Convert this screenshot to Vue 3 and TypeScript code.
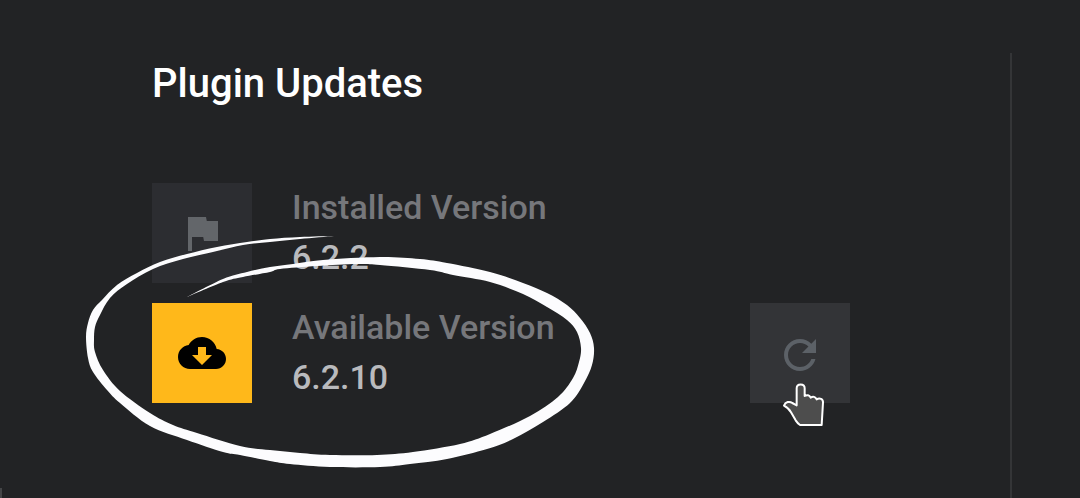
<script setup lang="ts">
type Point = [number, number]

interface VersionRow {
  id: string
  label: string
  version: string
  icon: string
  highlighted: boolean
}

const rows: VersionRow[] = [
  {
    id: 'installed',
    label: 'Installed Version',
    version: '6.2.2',
    icon: 'M14.4 6L14 4H5v17h2v-7h5.6l.4 2h7V6z',
    highlighted: false,
  },
  {
    id: 'available',
    label: 'Available Version',
    version: '6.2.10',
    icon: 'M19.35 10.04C18.67 6.59 15.64 4 12 4 9.11 4 6.6 5.64 5.35 8.04 2.34 8.36 0 10.91 0 14c0 3.31 2.69 6 6 6h13c2.76 0 5-2.24 5-5 0-2.64-2.05-4.78-4.65-4.96zM17 13l-5 5-5-5h3V9h4v4h3z',
    highlighted: true,
  },
]

// Outer edge of the brush stroke, counter-clockwise from its first tip.
const outerEdge: Point[] = [
  [334, 236], [300, 237], [270, 239], [247, 242], [217, 247], [187, 254], [160, 262], [137, 273],
  [117, 285], [102, 300], [93, 310], [88, 323], [86, 337], [88, 358], [93, 372], [107, 390],
  [120, 403], [150, 426], [187, 440], [223, 452], [240, 455], [270, 461], [290, 464], [330, 467],
  [380, 467], [410, 464], [447, 459], [487, 449], [513, 439], [543, 422], [570, 403], [584, 383],
  [592, 365], [594, 348], [590, 333], [580, 318], [567, 305], [547, 293], [523, 283], [490, 272],
  [447, 263], [420, 259], [380, 257], [323, 260], [293, 264], [270, 267], [247, 272], [223, 279],
  [187, 297],
]

// Inner edge, back from the second tip to the first.
const innerEdge: Point[] = [
  [187, 297], [223, 282], [243, 277], [270, 272], [280, 269], [317, 266], [357, 264], [380, 265],
  [430, 270], [453, 275], [490, 282], [523, 294], [547, 307], [567, 320], [577, 332], [581, 348],
  [579, 362], [573, 378], [558, 397], [530, 416], [490, 434], [460, 444], [413, 452],
  [377, 455], [330, 455], [300, 453], [270, 450], [240, 446], [197, 433], [173, 425], [150, 413],
  [120, 391], [103, 370], [95, 352], [94, 340], [95, 327], [100, 315], [110, 298], [127, 284],
  [153, 269], [183, 259], [217, 251], [243, 245], [270, 242], [300, 239], [334, 236],
]

function curveThrough(points: Point[]): string {
  return points
    .slice(0, -1)
    .map((p, i) => {
      const before = points[i - 1] ?? p
      const next = points[i + 1]
      const after = points[i + 2] ?? next
      const c1 = [p[0] + (next[0] - before[0]) / 6, p[1] + (next[1] - before[1]) / 6]
      const c2 = [next[0] - (after[0] - p[0]) / 6, next[1] - (after[1] - p[1]) / 6]
      return `C${c1.join(' ')} ${c2.join(' ')} ${next.join(' ')}`
    })
    .join('')
}

const brushPath = `M${outerEdge[0].join(' ')}${curveThrough(outerEdge)}${curveThrough(innerEdge)}Z`
</script>

<template>
  <main class="page">
    <section class="panel" aria-labelledby="updates-title">
      <h1 id="updates-title" class="title">Plugin Updates</h1>
      <div class="rows">
        <div v-for="row in rows" :key="row.id" class="row">
          <div class="tile" :class="{ highlighted: row.highlighted }">
            <svg class="icon" viewBox="0 0 24 24" aria-hidden="true"><path :d="row.icon" /></svg>
          </div>
          <dl class="details">
            <dt>{{ row.label }}</dt>
            <dd>{{ row.version }}</dd>
          </dl>
          <svg v-if="row.highlighted" class="brush" viewBox="80 230 520 244" aria-hidden="true">
            <path :d="brushPath" />
          </svg>
          <button v-if="row.highlighted" class="refresh" type="button" aria-label="Check for updates">
            <svg class="icon" viewBox="0 0 24 24" aria-hidden="true">
              <path d="M17.65 6.35C16.2 4.9 14.21 4 12 4c-4.42 0-7.99 3.58-7.99 8s3.57 8 7.99 8c3.73 0 6.84-2.55 7.73-6h-2.08c-.82 2.33-3.04 4-5.65 4-3.31 0-6-2.69-6-6s2.69-6 6-6c1.66 0 3.14.69 4.22 1.78L13 11h7V4l-2.35 2.35z" />
            </svg>
            <svg class="pointer" viewBox="0 0 141 144" aria-hidden="true">
              <path d="M50 76V25C50 10 74 10 74 25V48C81 44 88 45 92 53C99 48 106 50 110 58C119 52 130 57 129 68L125 135H60C55 132 51 127 47 121L33 97C28 87 21 82 12 77C16 65 29 63 37 69Z" />
            </svg>
          </button>
        </div>
      </div>
    </section>
  </main>
</template>

<style>
body {
  margin: 0;
  background: #222325;
}
</style>

<style scoped>
.page {
  position: relative;
  box-sizing: border-box;
  min-height: 100vh;
  padding: 53px 68px 0 0;
  display: flex;
  background: #222325;
  color: #fff;
  font-family: Roboto, "Liberation Sans", sans-serif;
  font-weight: 500;
  overflow: hidden;
}

.page::before {
  content: "";
  position: absolute;
  left: 0;
  bottom: 0;
  width: 2px;
  height: 10px;
  background: #444547;
}

.panel {
  flex: 1;
  padding: 0 160px 0 152px;
  border-right: 2px solid #343537;
}

.title {
  margin: 0 0 68px;
  font-size: 40px;
  line-height: 62px;
  font-weight: 500;
}

.rows {
  display: flex;
  flex-direction: column;
  gap: 20px;
}

.row {
  position: relative;
  display: flex;
  align-items: center;
  gap: 40px;
}

.tile,
.refresh {
  flex: none;
  display: flex;
  align-items: center;
  justify-content: center;
  box-sizing: border-box;
  width: 100px;
  height: 100px;
  background: #2c2d31;
  color: #63666a;
}

.tile.highlighted {
  background: #ffb81a;
  color: #000;
}

.icon {
  display: block;
  width: 48px;
  height: 48px;
  fill: currentColor;
}

.details {
  flex: 1;
  display: flex;
  flex-direction: column;
  gap: 2px;
  margin: 0;
  padding-bottom: 2px;
  font-size: 34px;
  line-height: 48px;
}

.details dt {
  color: #76777b;
}

.details dd {
  margin: 0;
  color: #b9babd;
}

.refresh {
  position: relative;
  padding: 4px 0 0;
  border: 0;
  background: #333437;
  color: #5c6167;
  cursor: pointer;
}

.brush {
  position: absolute;
  left: -72px;
  top: -73px;
  width: 520px;
  height: 244px;
  fill: #fcfcfe;
  pointer-events: none;
}

.pointer {
  position: absolute;
  left: 30px;
  top: 77px;
  width: 47px;
  height: 48px;
  fill: #4d4d4d;
  stroke: #fff;
  stroke-width: 6;
  stroke-linejoin: round;
}
</style>
